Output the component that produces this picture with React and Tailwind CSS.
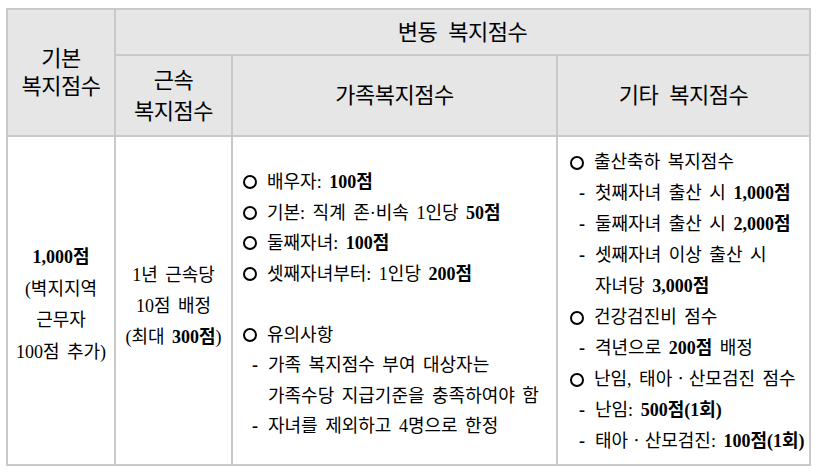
import React from "react";

// 복지점수 표 – 헤더 2단 + 본문 1행

const Circle = () => (
  <span className="inline-block w-[14px] h-[14px] rounded-full border-2 border-black" />
);

const Item = ({ mark, children }) => (
  <div className="flex">
    {mark === "o" ? (
      <span className="w-[24px] shrink-0 flex items-center">
        <Circle />
      </span>
    ) : (
      <span className="w-[25px] shrink-0 pl-[9px] font-bold">-</span>
    )}
    <span>{children}</span>
  </div>
);

const B = ({ children }) => <span className="font-bold">{children}</span>;

export default function App() {
  return (
    <div className="bg-white w-[818px] h-[474px] pt-[8px] pl-[6px] text-black font-['Liberation_Serif','Noto_Sans_CJK_KR',serif]">
      <div className="grid w-fit grid-cols-[106px_115px_323px_251px] grid-rows-[44px_79px_327px] gap-[2px] p-[2px] bg-[#c9c9c9]">
        {/* header */}
        <div className="row-span-2 bg-[#e6e6e6] flex flex-col items-center justify-center text-[22px] leading-[28px] tracking-[-0.5px]">
          <span>기본</span>
          <span>복지점수</span>
        </div>
        <div className="col-span-3 bg-[#e6e6e6] flex items-center justify-center text-[22px] tracking-[-0.5px] [word-spacing:6px]">
          변동 복지점수
        </div>
        <div className="bg-[#e6e6e6] flex flex-col items-center justify-center text-[22px] leading-[31px] tracking-[-0.5px]">
          <span>근속</span>
          <span>복지점수</span>
        </div>
        <div className="bg-[#e6e6e6] flex items-center justify-center text-[22px] tracking-[-0.5px]">
          가족복지점수
        </div>
        <div className="bg-[#e6e6e6] flex items-center justify-center text-[22px] tracking-[-0.5px] [word-spacing:6px]">
          기타 복지점수
        </div>

        {/* body */}
        <div className="bg-white flex flex-col items-center justify-center pt-[9px] text-[18px] leading-[31.5px] [word-spacing:3px] text-center">
          <B>1,000점</B>
          <span>(벽지지역</span>
          <span>근무자</span>
          <span>100점 추가)</span>
        </div>
        <div className="bg-white flex flex-col items-center justify-center pt-[11px] text-[18px] leading-[31px] [word-spacing:3px] text-center">
          <span>1년 근속당</span>
          <span>10점 배정</span>
          <span>
            (최대 <B>300점</B>)
          </span>
        </div>
        <div className="bg-white pt-[30px] pl-[10px] text-[18px] leading-[30.5px] [word-spacing:3px]">
          <Item mark="o">
            배우자: <B>100점</B>
          </Item>
          <Item mark="o">
            기본: 직계 존·비속 1인당 <B>50점</B>
          </Item>
          <Item mark="o">
            둘째자녀: <B>100점</B>
          </Item>
          <Item mark="o">
            셋째자녀부터: 1인당 <B>200점</B>
          </Item>
          <div className="h-[30.5px]" />
          <Item mark="o">유의사항</Item>
          <Item mark="-">
            가족 복지점수 부여 대상자는
            <br />
            가족수당 지급기준을 충족하여야 함
          </Item>
          <Item mark="-">자녀를 제외하고 4명으로 한정</Item>
        </div>
        <div className="bg-white pt-[10px] pl-[12px] text-[18px] leading-[31px] [word-spacing:3px]">
          <Item mark="o">출산축하 복지점수</Item>
          <Item mark="-">
            첫째자녀 출산 시 <B>1,000점</B>
          </Item>
          <Item mark="-">
            둘째자녀 출산 시 <B>2,000점</B>
          </Item>
          <Item mark="-">
            셋째자녀 이상 출산 시
            <br />
            자녀당 <B>3,000점</B>
          </Item>
          <Item mark="o">건강검진비 점수</Item>
          <Item mark="-">
            격년으로 <B>200점</B> 배정
          </Item>
          <Item mark="o">난임, 태아ㆍ산모검진 점수</Item>
          <Item mark="-">
            난임: <B>500점(1회)</B>
          </Item>
          <Item mark="-">
            태아ㆍ산모검진: <B>100점(1회)</B>
          </Item>
        </div>
      </div>
    </div>
  );
}
